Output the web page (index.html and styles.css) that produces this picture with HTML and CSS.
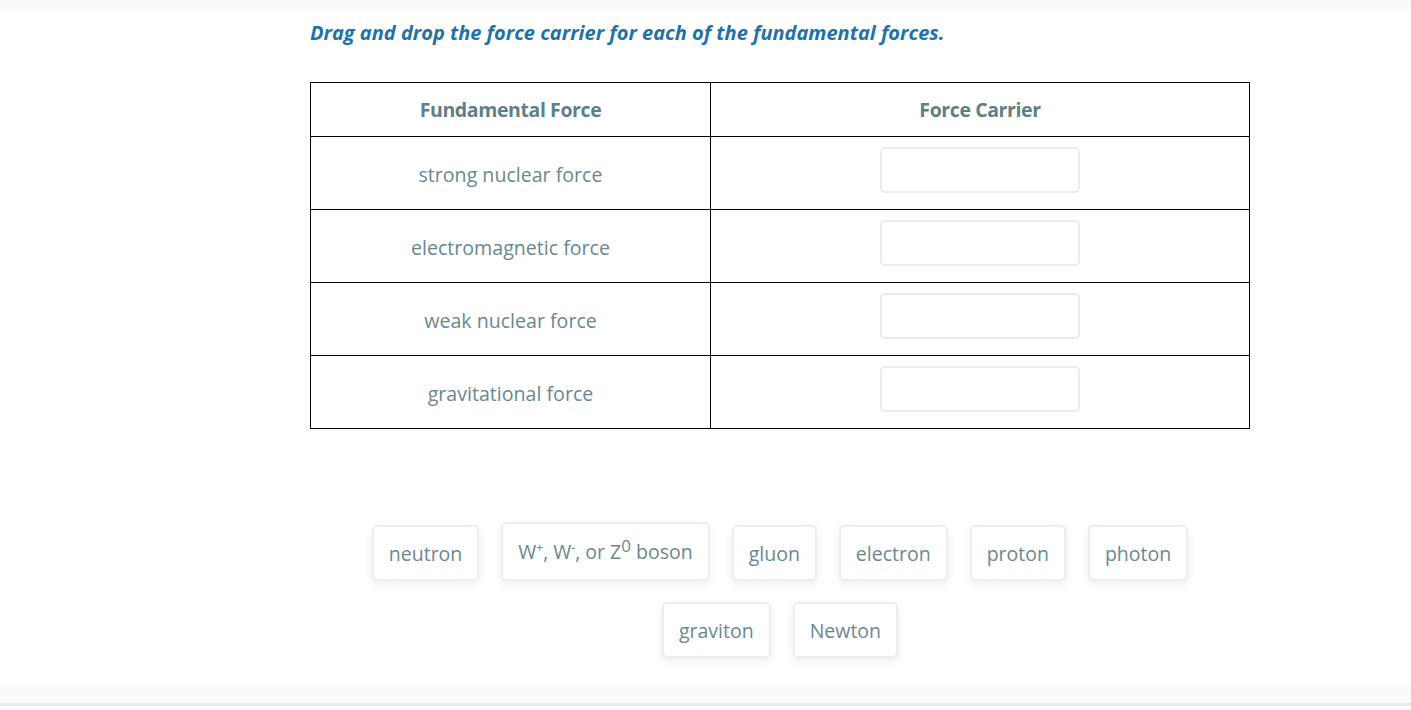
FILE: index.html
```html
<!DOCTYPE html>
<html>
<head>
<meta charset="utf-8">
<link rel="stylesheet" href="styles.css">
</head>
<body>
<div class="top-strip"></div>
<main class="main">
  <div class="container">
    <h2 class="prompt">Drag and drop the force carrier for each of the fundamental forces.</h2>
    <table class="match">
      <thead>
        <tr><th class="col-a">Fundamental Force</th><th>Force Carrier</th></tr>
      </thead>
      <tbody>
        <tr><td class="label">strong nuclear force</td><td class="slot"><div class="drop"></div></td></tr>
        <tr><td class="label">electromagnetic force</td><td class="slot"><div class="drop"></div></td></tr>
        <tr><td class="label">weak nuclear force</td><td class="slot"><div class="drop"></div></td></tr>
        <tr><td class="label">gravitational force</td><td class="slot"><div class="drop"></div></td></tr>
      </tbody>
    </table>
    <div class="bank">
      <div class="chip">neutron</div>
      <div class="chip chip-tall">W<sup>+</sup>, W<sup>-</sup>, or Z<sup class="big">0</sup> boson</div>
      <div class="chip">gluon</div>
      <div class="chip">electron</div>
      <div class="chip">proton</div>
      <div class="chip">photon</div>
      <div class="chip">graviton</div>
      <div class="chip">Newton</div>
    </div>
  </div>
</main>
<footer class="footer"></footer>
</body>
</html>
```
FILE: styles.css
```css
html, body {
  margin: 0;
  padding: 0;
  background: #ffffff;
}
body {
  font-family: "Open Sans", "Noto Sans", sans-serif;
  color: #6a8891;
}
.top-strip {
  height: 9px;
  background: #f9fbfa;
}
.main {
  height: 675px;
}
.container {
  width: 940px;
  margin-left: 310px;
}
.prompt {
  margin: 0;
  padding-top: 12px;
  font-size: 20px;
  line-height: 24px;
  font-style: italic;
  font-weight: 700;
  color: #1f72a8;
  letter-spacing: 0;
}
.match {
  margin-top: 37px;
  width: 940px;
  border-collapse: collapse;
  table-layout: fixed;
}
.match th, .match td {
  border: 1px solid #000;
  text-align: center;
  padding: 0;
}
.match th {
  height: 53px;
  font-size: 19.5px;
  font-weight: 700;
  color: #5f7f88;
  letter-spacing: -0.4px;
}
.col-a { width: 399px; }
.match td {
  font-size: 19.6px;
  color: #6a8891;
}
.match td.label {
  height: 70px;
  padding-top: 2px;
}
.match td.slot {
  height: 66px;
  padding-bottom: 6px;
}
.drop {
  width: 196px;
  height: 42px;
  margin: 0 auto;
  border: 2px solid #ececec;
  border-radius: 5px;
  background: #fff;
}
.bank {
  display: flex;
  flex-wrap: wrap;
  justify-content: center;
  align-items: flex-end;
  padding: 0 56px;
  margin-top: 93px;
  row-gap: 21px;
  column-gap: 22px;
}
.chip {
  height: 52px;
  padding: 0 15px;
  border: 2px solid #ededed;
  border-radius: 5px;
  background: #fff;
  box-shadow: 0 3px 10px rgba(0,0,0,0.07);
  font-size: 19.5px;
  line-height: 53px;
  color: #6a8891;
  white-space: nowrap;
}
.chip-tall {
  height: 55px;
  line-height: 56px;
}
.chip sup {
  font-size: 12px;
  line-height: 0;
  vertical-align: 7px;
}
.chip sup.big {
  font-size: 17px;
  vertical-align: 7px;
}
.footer {
  height: 19px;
  background: #f9fbfa;
  border-bottom: 3px solid #e9e9e9;
}
```
